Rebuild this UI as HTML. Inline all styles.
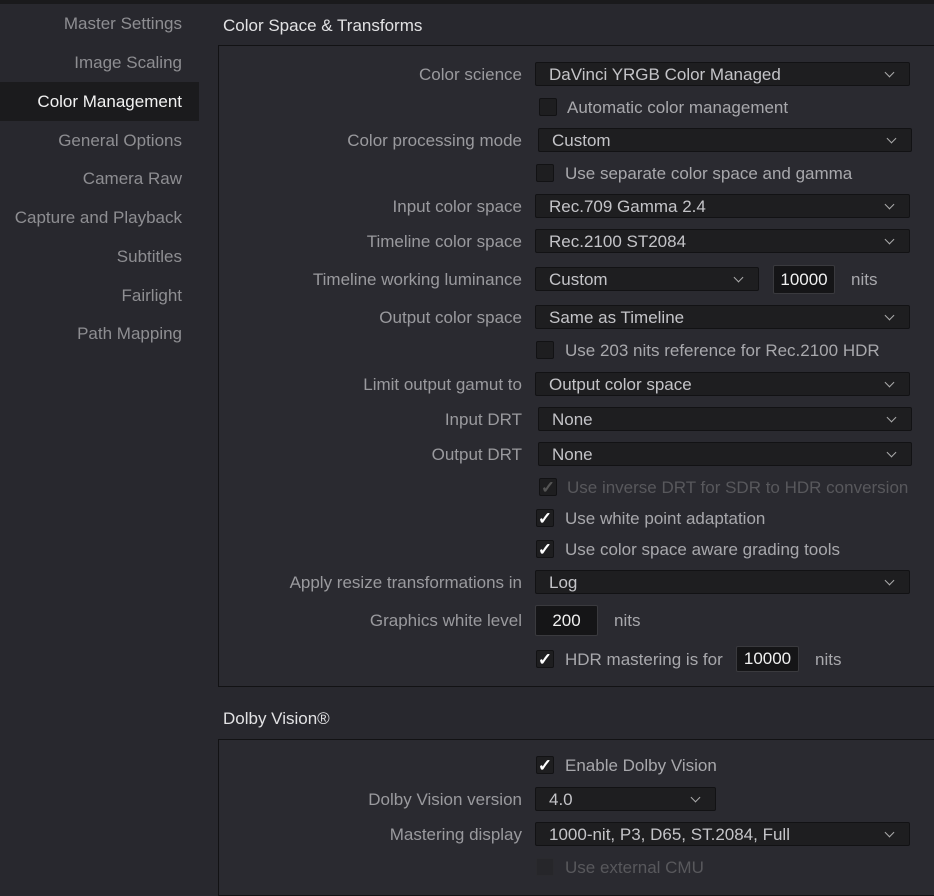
<!DOCTYPE html><html><head><style>
body{margin:0;width:934px;height:896px;background:#28282e;font-family:"Liberation Sans",sans-serif;font-size:17px;overflow:hidden;position:relative}
div{position:absolute;box-sizing:border-box}
.top{left:0;top:0;width:934px;height:4px;background:#1a1a1c}
.side{right:752px;color:#8e8e92;white-space:nowrap;line-height:22px}
.sel{left:0;top:82px;width:199px;height:39px;background:#1b1b1d}
.h{color:#e2e2e4;white-space:nowrap;line-height:22px}
.panel{left:218px;width:760px;border:1px solid #121214;background:#2a2a30}
.lab{right:412px;color:#9a9a9e;white-space:nowrap;line-height:22px}
.dd{height:24px;background:#1e1e20;border:1px solid #121214;border-radius:2px;color:#c4c4c8;padding-left:13px;line-height:23px;white-space:nowrap}
.dd:after{content:"";position:absolute;right:16px;top:6px;width:6px;height:6px;border-right:1.5px solid #aaa;border-bottom:1.5px solid #aaa;transform:rotate(45deg)}
.cb{width:18px;height:18px;background:#1e1e20;border:1px solid #121214;border-radius:2px;color:#fff;font-size:17px;font-weight:bold;line-height:17px;text-align:center}
.t{color:#a8a8ac;white-space:nowrap;line-height:22px}
.dis{color:#58585c}
.in{height:29px;background:#151517;border:1px solid #3a3a3e;border-radius:2px;color:#f0f0f0;text-align:center;line-height:27px}
</style></head><body>
<div class="top"></div>
<div class="sel"></div>
<div class="side" style="top:13px">Master Settings</div>
<div class="side" style="top:52px">Image Scaling</div>
<div class="side" style="top:91px;color:#f2f2f2">Color Management</div>
<div class="side" style="top:130px">General Options</div>
<div class="side" style="top:168px">Camera Raw</div>
<div class="side" style="top:207px">Capture and Playback</div>
<div class="side" style="top:246px">Subtitles</div>
<div class="side" style="top:285px">Fairlight</div>
<div class="side" style="top:323px">Path Mapping</div>

<div class="h" style="left:223px;top:15px">Color Space &amp; Transforms</div>
<div class="panel" style="top:45px;height:642px"></div>
<div class="h" style="left:223px;top:708px">Dolby Vision®</div>
<div class="panel" style="top:739px;height:157px"></div>

<div class="lab" style="top:64px">Color science</div><div class="dd" style="left:535px;top:62px;width:375px">DaVinci YRGB Color Managed</div>
<div class="cb" style="left:539px;top:98px"></div><div class="t" style="left:567px;top:97px">Automatic color management</div>
<div class="lab" style="top:130px">Color processing mode</div><div class="dd" style="left:538px;top:128px;width:374px">Custom</div>
<div class="cb" style="left:536px;top:164px"></div><div class="t" style="left:565px;top:163px">Use separate color space and gamma</div>
<div class="lab" style="top:196px">Input color space</div><div class="dd" style="left:535px;top:194px;width:375px">Rec.709 Gamma 2.4</div>
<div class="lab" style="top:231px">Timeline color space</div><div class="dd" style="left:535px;top:229px;width:375px">Rec.2100 ST2084</div>
<div class="lab" style="top:269px">Timeline working luminance</div><div class="dd" style="left:535px;top:267px;width:224px">Custom</div>
<div class="in" style="left:773px;top:265px;width:62px">10000</div><div class="t" style="left:851px;top:269px">nits</div>
<div class="lab" style="top:307px">Output color space</div><div class="dd" style="left:535px;top:305px;width:375px">Same as Timeline</div>
<div class="cb" style="left:536px;top:341px"></div><div class="t" style="left:565px;top:340px">Use 203 nits reference for Rec.2100 HDR</div>
<div class="lab" style="top:374px">Limit output gamut to</div><div class="dd" style="left:535px;top:372px;width:375px">Output color space</div>
<div class="lab" style="top:409px">Input DRT</div><div class="dd" style="left:538px;top:407px;width:374px">None</div>
<div class="lab" style="top:444px">Output DRT</div><div class="dd" style="left:538px;top:442px;width:374px">None</div>
<div class="cb" style="left:539px;top:478px;color:#555">✓</div><div class="t dis" style="left:567px;top:477px">Use inverse DRT for SDR to HDR conversion</div>
<div class="cb" style="left:536px;top:509px">✓</div><div class="t" style="left:565px;top:508px">Use white point adaptation</div>
<div class="cb" style="left:536px;top:540px">✓</div><div class="t" style="left:565px;top:539px">Use color space aware grading tools</div>
<div class="lab" style="top:572px">Apply resize transformations in</div><div class="dd" style="left:535px;top:570px;width:375px">Log</div>
<div class="lab" style="top:610px">Graphics white level</div><div class="in" style="left:535px;top:605px;width:63px;height:31px;line-height:29px">200</div><div class="t" style="left:614px;top:610px">nits</div>
<div class="cb" style="left:536px;top:650px">✓</div><div class="t" style="left:565px;top:649px">HDR mastering is for</div>
<div class="in" style="left:736px;top:646px;width:63px;height:26px;line-height:24px">10000</div><div class="t" style="left:815px;top:649px">nits</div>

<div class="cb" style="left:536px;top:756px">✓</div><div class="t" style="left:565px;top:755px">Enable Dolby Vision</div>
<div class="lab" style="top:789px">Dolby Vision version</div><div class="dd" style="left:535px;top:787px;width:181px">4.0</div>
<div class="lab" style="top:824px">Mastering display</div><div class="dd" style="left:535px;top:822px;width:375px">1000-nit, P3, D65, ST.2084, Full</div>
<div class="cb" style="left:536px;top:858px;border-color:#2a2a2e;background:#26262a"></div><div class="t dis" style="left:565px;top:857px">Use external CMU</div>
</body></html>
